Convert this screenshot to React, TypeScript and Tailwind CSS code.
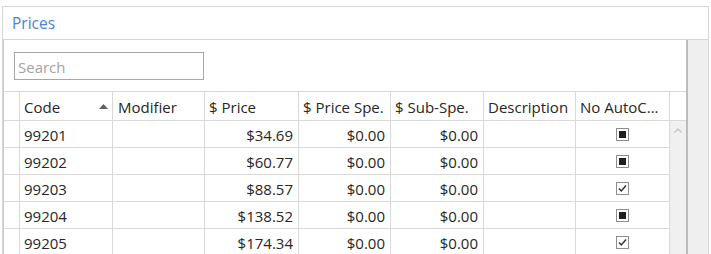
import React from "react";

type Row = {
  code: string;
  price: string;
  priceSpe: string;
  subSpe: string;
  noAuto: "mixed" | "checked";
};

const rows: Row[] = [
  { code: "99201", price: "$34.69", priceSpe: "$0.00", subSpe: "$0.00", noAuto: "mixed" },
  { code: "99202", price: "$60.77", priceSpe: "$0.00", subSpe: "$0.00", noAuto: "mixed" },
  { code: "99203", price: "$88.57", priceSpe: "$0.00", subSpe: "$0.00", noAuto: "checked" },
  { code: "99204", price: "$138.52", priceSpe: "$0.00", subSpe: "$0.00", noAuto: "mixed" },
  { code: "99205", price: "$174.34", priceSpe: "$0.00", subSpe: "$0.00", noAuto: "checked" },
];

const CheckBox = ({ state }: { state: "mixed" | "checked" }) => (
  <div className="w-[13px] h-[13px] border border-[#8e8e8e] bg-white flex items-center justify-center">
    {state === "mixed" ? (
      <div className="w-[7px] h-[7px] bg-[#202020]" />
    ) : (
      <svg width="11" height="11" viewBox="0 0 11 11">
        <path d="M2 5.5 L4.3 8 L9 2.6" fill="none" stroke="#333" strokeWidth="1.5" />
      </svg>
    )}
  </div>
);

const App = () => {
  return (
    <div
      className="w-[711px] h-[254px] overflow-hidden bg-white pt-[6px] pl-[2px] text-[#262626]"
      style={{ fontFamily: '"Open Sans", "Noto Sans", sans-serif' }}
    >
      <div className="w-[707px] h-[260px] border border-[#d6d6d6] flex flex-col">
        {/* Panel title */}
        <div className="h-[33px] shrink-0 border-b border-[#d6d6d6] pl-[9px] pt-[2px] flex items-center">
          <span className="text-[15.5px] text-[#4a83cf] leading-none">Prices</span>
        </div>

        <div className="flex flex-1">
          {/* Content */}
          <div className="w-[683px] border-l border-[#cbcbcb] flex flex-col">
            <div className="pl-[10px] pt-[12px]">
              <div className="w-[190px] h-[28px] border border-[#a6a6a6] flex items-center pl-[3px] pt-[2px] text-[15px] text-[#a3a3a3]">
                Search
              </div>
            </div>

            {/* Grid */}
            <div className="mt-[11px] border-t border-[#d9d9d9] text-[15px]">
              <div className="flex h-[29px] border-b border-[#d9d9d9]">
                <div className="w-[16px] border-r border-[#d9d9d9]" />
                <div className="w-[93px] border-r border-[#d9d9d9] flex items-center justify-between pl-[4px] pr-[4px] pt-[2px]">
                  <span>Code</span>
                  <svg width="9" height="5" viewBox="0 0 9 5" className="-mt-[2px]">
                    <path d="M0 5 L4.5 0 L9 5 Z" fill="#606060" />
                  </svg>
                </div>
                <div className="w-[92px] border-r border-[#d9d9d9] flex items-center pl-[5px] pt-[2px]">Modifier</div>
                <div className="w-[94px] border-r border-[#d9d9d9] flex items-center pl-[4px] pt-[2px]">$ Price</div>
                <div className="w-[92px] border-r border-[#d9d9d9] flex items-center pl-[4px] pt-[2px] whitespace-nowrap overflow-hidden">$ Price Spe.</div>
                <div className="w-[93px] border-r border-[#d9d9d9] flex items-center pl-[4px] pt-[2px] whitespace-nowrap overflow-hidden">$ Sub-Spe.</div>
                <div className="w-[92px] border-r border-[#d9d9d9] flex items-center pl-[4px] pt-[2px] whitespace-nowrap overflow-hidden">Description</div>
                <div className="w-[94px] border-r border-[#d9d9d9] flex items-center pl-[4px] pt-[2px] whitespace-nowrap overflow-hidden">No AutoC...</div>
                <div className="flex-1" />
              </div>

              <div className="flex">
                <div className="w-[666px]">
                  {rows.map((r) => (
                    <div key={r.code} className="flex h-[27px] border-b border-[#d9d9d9]">
                      <div className="w-[16px] border-r border-[#d9d9d9]" />
                      <div className="w-[93px] border-r border-[#d9d9d9] flex items-center pl-[4px] pt-[3px]">{r.code}</div>
                      <div className="w-[92px] border-r border-[#d9d9d9]" />
                      <div className="w-[94px] border-r border-[#d9d9d9] flex items-center justify-end pr-[5px] pt-[3px]">{r.price}</div>
                      <div className="w-[92px] border-r border-[#d9d9d9] flex items-center justify-end pr-[5px] pt-[3px]">{r.priceSpe}</div>
                      <div className="w-[93px] border-r border-[#d9d9d9] flex items-center justify-end pr-[5px] pt-[3px]">{r.subSpe}</div>
                      <div className="w-[92px] border-r border-[#d9d9d9]" />
                      <div className="w-[94px] border-r border-[#d9d9d9] flex items-center justify-center">
                        <CheckBox state={r.noAuto} />
                      </div>
                    </div>
                  ))}
                </div>
                {/* grid vertical scrollbar */}
                <div className="w-[16px] bg-[#f0f0f0] flex justify-center pt-[7px]">
                  <svg width="8" height="5" viewBox="0 0 8 5">
                    <path d="M0.5 4.5 L4 1 L7.5 4.5" fill="none" stroke="#c4c4c4" strokeWidth="1.3" />
                  </svg>
                </div>
              </div>
            </div>
          </div>

          {/* outer scrollbar */}
          <div className="w-[22px] bg-[#efefef] border-l-2 border-[#bcbcbc]" />
        </div>
      </div>
    </div>
  );
};

export default App;
